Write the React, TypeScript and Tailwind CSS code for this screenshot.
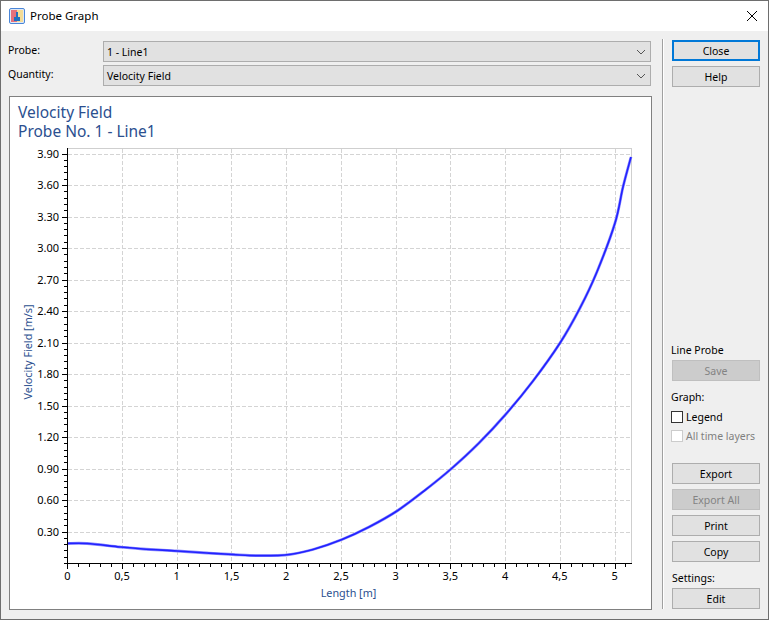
import React from "react";

const FONT = "[font-family:'Noto_Sans','Liberation_Sans',sans-serif]";

const curve: [number, number][] = [
  [67, 543.5], [87, 543.5], [120, 547], [143, 549], [177, 551], [207, 553], [233, 554.5], [250, 555.5], [277, 555.5], [291, 554.3],
  [313, 549.5], [342, 539.5], [369, 527], [397, 511], [424, 491], [451, 469], [479, 443], [506, 414], [533, 381], [560, 343], [580, 308],
  [597, 271.7], [615, 223], [623, 187], [631, 157],
];

function smoothPath(pts: [number, number][]) {
  let d = `M${pts[0][0]} ${pts[0][1]}`;
  for (let i = 0; i < pts.length - 1; i++) {
    const p0 = pts[Math.max(0, i - 1)];
    const p1 = pts[i];
    const p2 = pts[i + 1];
    const p3 = pts[Math.min(pts.length - 1, i + 2)];
    const c1x = p1[0] + (p2[0] - p0[0]) / 6;
    const c1y = p1[1] + (p2[1] - p0[1]) / 6;
    const c2x = p2[0] - (p3[0] - p1[0]) / 6;
    const c2y = p2[1] - (p3[1] - p1[1]) / 6;
    d += `C${c1x} ${c1y} ${c2x} ${c2y} ${p2[0]} ${p2[1]}`;
  }
  return d;
}

const yTicks = ["0.30", "0.60", "0.90", "1.20", "1.50", "1.80", "2.10", "2.40", "2.70", "3.00", "3.30", "3.60", "3.90"];
const xTicks = ["0", "0,5", "1", "1,5", "2", "2,5", "3", "3,5", "4", "4,5", "5"];
const X = (v: number) => 67.3 + 109.45 * v;
const Y = (v: number) => 563.5 - 105 * v;

function Chart() {
  const yMinor: number[] = [];
  for (let i = 0; i <= 66; i++) yMinor.push(i * 0.06);
  const xMinor: number[] = [];
  for (let i = 0; i <= 51; i++) xMinor.push(i * 0.1);
  const d = smoothPath(curve);
  return (
    <svg viewBox="10 141 641 468" className="block w-[641px] h-[468px]" shapeRendering="crispEdges">
      <path d="M67.5 148.5H631.5V563" fill="none" stroke="#cfcfcf" />
      {yTicks.map((t) => (
        <line key={t} x1={68} x2={631} y1={Math.floor(Y(+t)) + 0.5} y2={Math.floor(Y(+t)) + 0.5} stroke="#d4d4d4" strokeDasharray="4 2" />
      ))}
      {xTicks.map((_, i) => (
        <line key={i} x1={Math.round(X(i * 0.5)) + 0.5} x2={Math.round(X(i * 0.5)) + 0.5} y1={149} y2={563} stroke="#d4d4d4" strokeDasharray="4 2" />
      ))}
      <g fill="none" strokeLinejoin="round" shapeRendering="geometricPrecision">
        <path d={d} stroke="#8a8aff" strokeWidth={2.8} />
        <path d={d} stroke="#2222ff" strokeWidth={1.6} />
      </g>
      <line x1={67.5} x2={67.5} y1={148} y2={564} stroke="#000" />
      <line x1={67} x2={632} y1={563.5} y2={563.5} stroke="#000" />
      {yMinor.map((v, i) => {
        const y = Math.floor(Y(v)) + 0.5;
        const major = i % 5 === 0 && i > 0;
        return y > 148 ? <line key={i} x1={major ? 62 : 64} x2={67} y1={y} y2={y} stroke="#000" /> : null;
      })}
      {xMinor.map((v, i) => {
        const x = Math.round(X(v)) + 0.5;
        return <line key={i} x1={x} x2={x} y1={564} y2={i % 5 === 0 ? 569 : 567} stroke="#000" />;
      })}
      <g fontFamily="'Noto Sans','Liberation Sans',sans-serif" fontSize={11} fill="#000" shapeRendering="geometricPrecision">
        {yTicks.map((t) => (
          <text key={t} x={59} y={Math.floor(Y(+t)) + 4} textAnchor="end">{t}</text>
        ))}
        {xTicks.map((t, i) => (
          <text key={t} x={X(i * 0.5)} y={580} textAnchor="middle">{t}</text>
        ))}
      </g>
      <g fontFamily="'Noto Sans','Liberation Sans',sans-serif" fontSize={10.8} fill="#2b4f8f" shapeRendering="geometricPrecision">
        <text x={348.5} y={597} textAnchor="middle">Length [m]</text>
        <text transform="translate(32 352) rotate(-90)" textAnchor="middle">Velocity Field [m/s]</text>
      </g>
    </svg>
  );
}

function Chevron() {
  return (
    <svg width="10" height="6" viewBox="0 0 10 6" className="shrink-0">
      <path d="M1 1l4 4 4-4" fill="none" stroke="#555" strokeWidth="1" />
    </svg>
  );
}

function Combo({ label, value }: { label: string; value: string }) {
  return (
    <div className="flex items-center h-[21px] -ml-px mr-px">
      <div className="w-[95px] shrink-0 text-[10.5px] leading-[14px] -mt-[4px] text-black">{label}</div>
      <div className="flex-1 h-[21px] bg-[#e1e1e1] border border-[#adadad] flex items-center justify-between pl-[3px] pr-[4px]">
        <span className="text-[10.5px] leading-[14px] text-black">{value}</span>
        <Chevron />
      </div>
    </div>
  );
}

function Btn({ children, disabled, primary, className = "" }: { children: React.ReactNode; disabled?: boolean; primary?: boolean; className?: string }) {
  const tone = primary
    ? "bg-[#e1e1e1] border-2 border-[#0078d7] text-black"
    : disabled
      ? "bg-[#cccccc] border border-[#bfbfbf] text-[#838383]"
      : "bg-[#e1e1e1] border border-[#adadad] text-black";
  return (
    <div className={`w-[88px] h-[21px] flex items-center justify-center text-[10.5px] leading-[14px] ${tone} ${className}`}>{children}</div>
  );
}

function AppIcon() {
  return (
    <svg width="16" height="16" viewBox="0 0 16 16" className="shrink-0">
      <rect x="0.5" y="0.5" width="15" height="15" rx="1.5" fill="#dfe8f5" stroke="#4a86d8" />
      <rect x="2" y="2" width="6" height="12" fill="#e4707c" />
      <rect x="8" y="2" width="6" height="12" fill="#f4dc96" />
      <path d="M7 4h2v5H7zM5 9h6v4H5z" fill="#1f6fc0" />
    </svg>
  );
}

export default function App() {
  return (
    <div className={`w-[769px] h-[620px] border border-[#6e6e6e] bg-[#efefef] flex flex-col overflow-hidden ${FONT}`}>
      <div className="h-[30px] shrink-0 bg-white flex items-center pl-[8px] pr-[10px]">
        <AppIcon />
        <span className="ml-[5px] text-[11.5px] leading-[16px] text-black">Probe Graph</span>
        <svg width="12" height="12" viewBox="0 0 12 12" className="ml-auto">
          <path d="M1 1l10 10M11 1L1 11" stroke="#000" strokeWidth="1" fill="none" />
        </svg>
      </div>
      <div className="flex-1 flex min-h-0">
        <div className="w-[643px] ml-[8px] pt-[10px] pb-[9px] flex flex-col shrink-0">
          <Combo label="Probe:" value="1 - Line1" />
          <div className="h-[3px] shrink-0" />
          <Combo label="Quantity:" value="Velocity Field" />
          <div className="flex-1 mt-[10px] bg-white border border-[#808080] flex flex-col min-h-0">
            <div className="pl-[8px] pt-[6px] h-[44px] shrink-0 text-[15.5px] leading-[19px] text-[#2b4f8f]">
              <div>Velocity Field</div>
              <div>Probe No. 1 - Line1</div>
            </div>
            <Chart />
          </div>
        </div>
        <div className="w-[2px] ml-[10px] mt-[8px] mb-[10px] shrink-0 border-l border-r border-l-[#a0a0a0] border-r-white" />
        <div className="ml-[8px] pt-[9px] pb-[10px] flex flex-col w-[88px]">
          <Btn primary>Close</Btn>
          <Btn className="mt-[5px]">Help</Btn>
          <div className="flex-1" />
          <div className="h-[16px] mb-[2px] text-[10.5px] leading-[16px] text-black -ml-px">Line Probe</div>
          <Btn disabled>Save</Btn>
          <div className="h-[16px] mt-[8px] text-[10.5px] leading-[16px] text-black -ml-px">Graph:</div>
          <div className="flex items-center h-[12px] mt-[6px] -ml-px">
            <div className="w-[12px] h-[12px] bg-white border border-[#333333] shrink-0" />
            <span className="ml-[3px] text-[10.5px] leading-[14px] text-black">Legend</span>
          </div>
          <div className="flex items-center h-[12px] mt-[7px] -ml-px whitespace-nowrap">
            <div className="w-[12px] h-[12px] bg-white border border-[#cccccc] shrink-0" />
            <span className="ml-[3px] text-[10.5px] leading-[14px] text-[#7f7f7f]">All time layers</span>
          </div>
          <Btn className="mt-[21px]">Export</Btn>
          <Btn disabled className="mt-[5px]">Export All</Btn>
          <Btn className="mt-[5px]">Print</Btn>
          <Btn className="mt-[5px]">Copy</Btn>
          <div className="h-[16px] mt-[8px] text-[10.5px] leading-[16px] text-black">Settings:</div>
          <Btn className="mt-[2px]">Edit</Btn>
        </div>
      </div>
    </div>
  );
}
